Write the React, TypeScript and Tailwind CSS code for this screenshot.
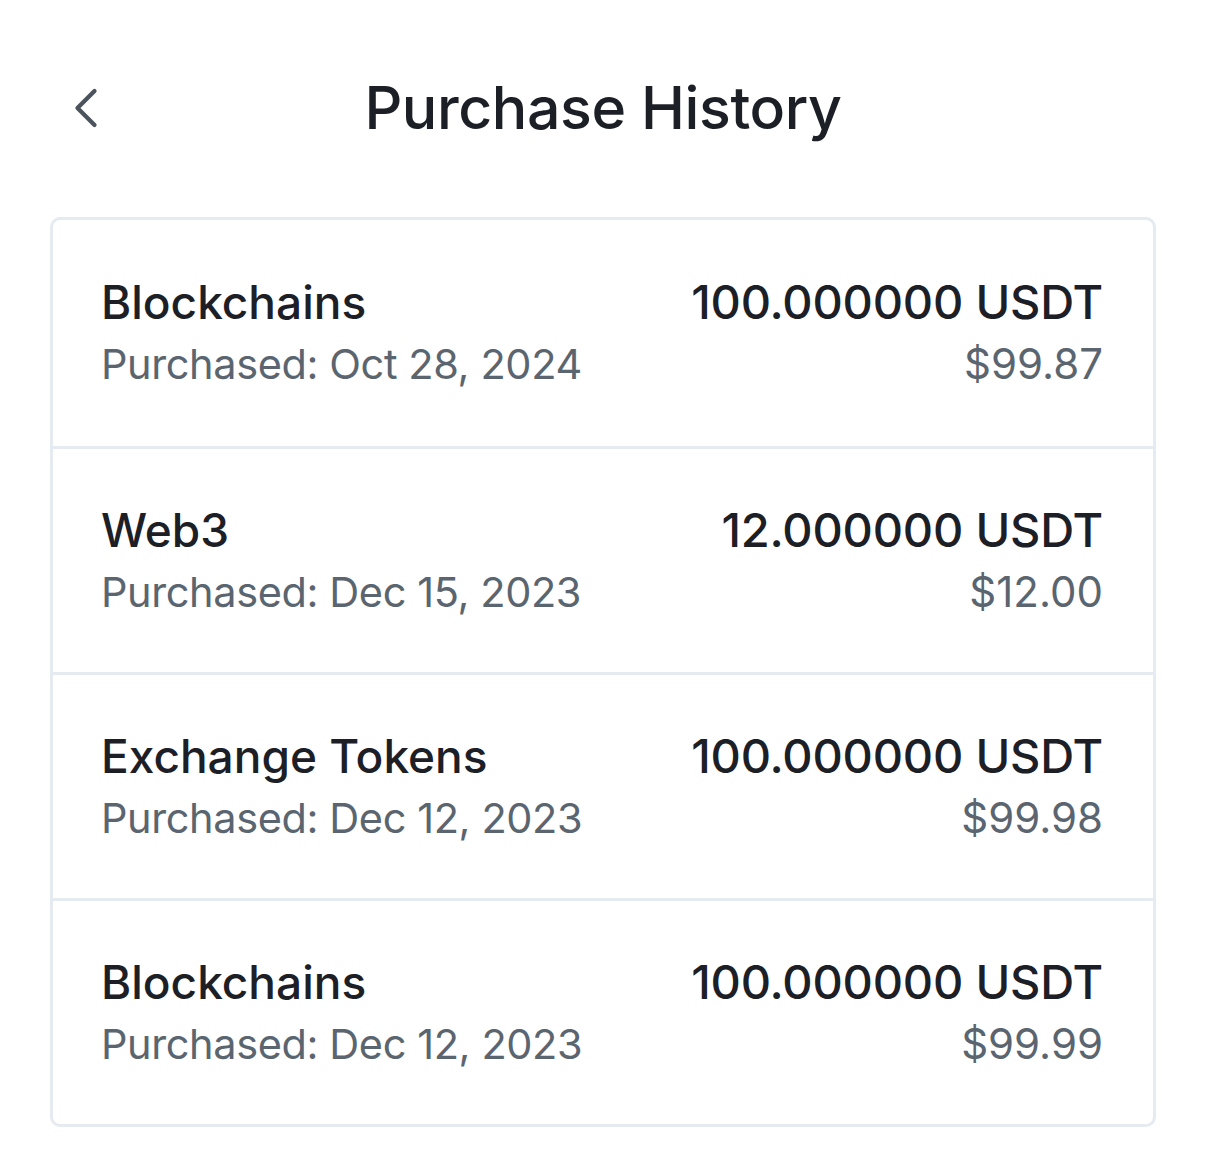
import { ChevronLeft } from "lucide-react";

const PURCHASES = [
  { name: "Blockchains", date: "Oct 28, 2024", amount: "100.000000 USDT", usd: "$99.87" },
  { name: "Web3", date: "Dec 15, 2023", amount: "12.000000 USDT", usd: "$12.00" },
  { name: "Exchange Tokens", date: "Dec 12, 2023", amount: "100.000000 USDT", usd: "$99.98" },
  { name: "Blockchains", date: "Dec 12, 2023", amount: "100.000000 USDT", usd: "$99.99" },
];

export default function App() {
  return (
    <div className="min-h-[1160px] bg-white px-[50px] pt-[72px] font-['Inter',sans-serif] text-[#1c2026]">
      <header className="relative flex h-[72px] items-center justify-center">
        <button className="absolute left-[2px] top-1/2 -translate-y-1/2 text-[#4b535c]">
          <ChevronLeft size={68} strokeWidth={1.5} />
        </button>
        <h1 className="text-[59px] font-medium tracking-[-0.4px]">Purchase History</h1>
      </header>

      <div className="mt-[73px] overflow-hidden rounded-[10px] border-[3px] border-[#e5ebf1]">
        {PURCHASES.map((p, i) => (
          <div
            key={i}
            className={`flex h-[226px] items-center justify-between pl-[48px] pr-[50px] ${
              i > 0 ? "border-t-[3px] border-[#e5ebf1]" : ""
            }`}
          >
            <div className="flex flex-col gap-[6px]">
              <span className="text-[46px] font-medium leading-[56px] tracking-[0px]">{p.name}</span>
              <span className="text-[41.5px] leading-[56px] text-[#5b6570] tracking-[-0.4px]">Purchased: {p.date}</span>
            </div>
            <div className="flex flex-col items-end gap-[6px]">
              <span className="text-[47px] font-medium leading-[56px] tracking-[-0.2px]">{p.amount}</span>
              <span className="text-[42px] leading-[56px] text-[#5b6570] tracking-[0px]">{p.usd}</span>
            </div>
          </div>
        ))}
      </div>
    </div>
  );
}
